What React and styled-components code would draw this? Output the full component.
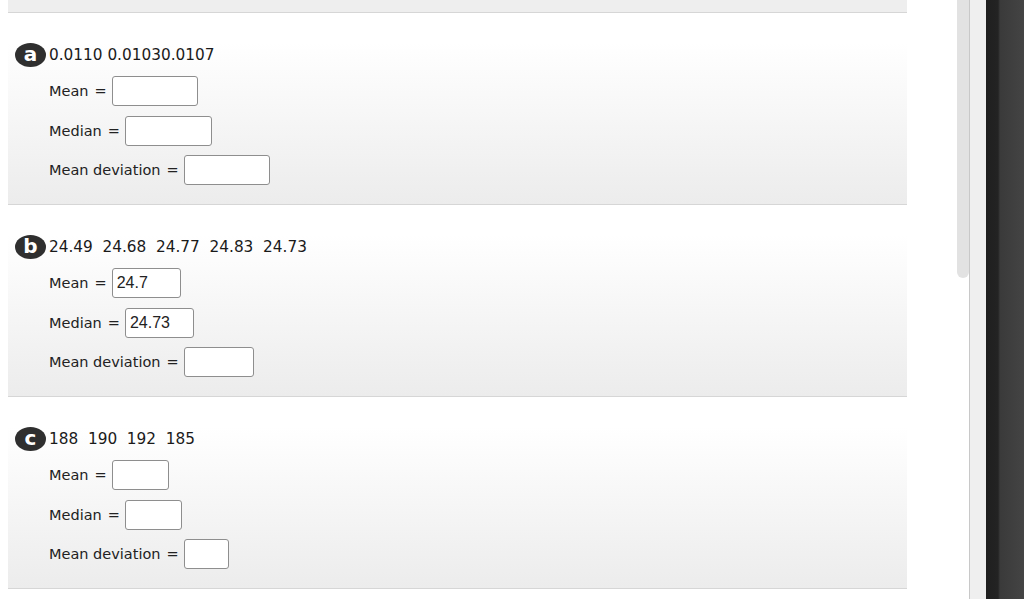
import styled, { createGlobalStyle } from 'styled-components';

const GlobalStyle = createGlobalStyle`
  html, body {
    margin: 0;
    padding: 0;
    height: 100%;
    overflow: hidden;
    background: #ffffff;
  }
  body {
    font-family: "DejaVu Sans", Verdana, sans-serif;
    color: #222;
  }
`;

const Screen = styled.div`
  display: flex;
  height: 599px;
  width: 1024px;
`;

const Main = styled.main`
  flex: 1;
  padding: 0 0 0 8px;
`;

const Column = styled.div`
  width: 899px;
`;

const PrevStrip = styled.div`
  height: 12px;
  background: #eeeeee;
  border-bottom: 1px solid #d6d6d6;
`;

const Panel = styled.section`
  height: 192px;
  box-sizing: border-box;
  padding: 30px 0 0 7px;
  border-bottom: 1px solid #d6d6d6;
  background: linear-gradient(to bottom, #ffffff 0px, #ffffff 30px, #ececec 100%);
`;

const Header = styled.div`
  display: flex;
  align-items: center;
  gap: 3px;
  height: 24px;
`;

const Badge = styled.span`
  display: inline-flex;
  align-items: center;
  justify-content: center;
  width: 31px;
  height: 24px;
  border-radius: 50%;
  background: #2f2f2f;
  color: #fff;
  font-family: "DejaVu Sans", sans-serif;
  font-weight: bold;
  font-size: 20px;
  line-height: 1;
  padding-bottom: 2px;
  box-sizing: border-box;
`;

const Data = styled.span`
  font-size: 15.3px;
  color: #1a1a1a;
  white-space: pre;
`;

const Rows = styled.div`
  display: flex;
  flex-direction: column;
  gap: 9.5px;
  margin-top: 9px;
  padding-left: 34px;
`;

const Row = styled.label`
  display: flex;
  align-items: center;
  height: 30px;
  font-size: 14.5px;
  color: #222;
`;

const Equals = styled.span`
  margin: 0 5px 0 6px;
`;

const Field = styled.input`
  box-sizing: border-box;
  width: ${p => p.$w}px;
  height: 30px;
  border: 1px solid #8e8e8e;
  border-radius: 3px;
  background: #fff;
  padding: 0 4px;
  font-family: "Liberation Sans", Arial, sans-serif;
  font-size: 16px;
  color: #222;
  outline: none;
`;

const ScrollTrack = styled.div`
  width: 12px;
  background: #ffffff;
`;

const Thumb = styled.div`
  height: 278px;
  background: #e2e2e2;
  border-radius: 0 0 6px 6px;
`;

const Gutter = styled.div`
  width: 16px;
  background: #efefef;
  border-left: 1px solid #c8c8c8;
`;

const DarkEdge = styled.div`
  width: 38px;
  background: linear-gradient(to right, #1f1f1f 0px, #232323 12px, #3a3a3a 14px, #444 100%);
`;

const parts = [
  {
    id: 'a',
    data: '0.0110 0.01030.0107',
    fields: [
      { label: 'Mean', w: 86, value: '' },
      { label: 'Median', w: 87, value: '' },
      { label: 'Mean deviation', w: 86, value: '' },
    ],
  },
  {
    id: 'b',
    data: '24.49  24.68  24.77  24.83  24.73',
    fields: [
      { label: 'Mean', w: 69, value: '24.7' },
      { label: 'Median', w: 69, value: '24.73' },
      { label: 'Mean deviation', w: 70, value: '' },
    ],
  },
  {
    id: 'c',
    data: '188  190  192  185',
    fields: [
      { label: 'Mean', w: 57, value: '' },
      { label: 'Median', w: 57, value: '' },
      { label: 'Mean deviation', w: 45, value: '' },
    ],
  },
];

const App = () => {
  return (
    <Screen>
      <GlobalStyle />
      <Main>
        <Column>
          <PrevStrip />
          {parts.map(part => (
            <Panel key={part.id}>
              <Header>
                <Badge>{part.id}</Badge>
                <Data>{part.data}</Data>
              </Header>
              <Rows>
                {part.fields.map(f => (
                  <Row key={f.label}>
                    {f.label}
                    <Equals>=</Equals>
                    <Field $w={f.w} defaultValue={f.value} />
                  </Row>
                ))}
              </Rows>
            </Panel>
          ))}
        </Column>
      </Main>
      <ScrollTrack>
        <Thumb />
      </ScrollTrack>
      <Gutter />
      <DarkEdge />
    </Screen>
  );
};

export default App;
